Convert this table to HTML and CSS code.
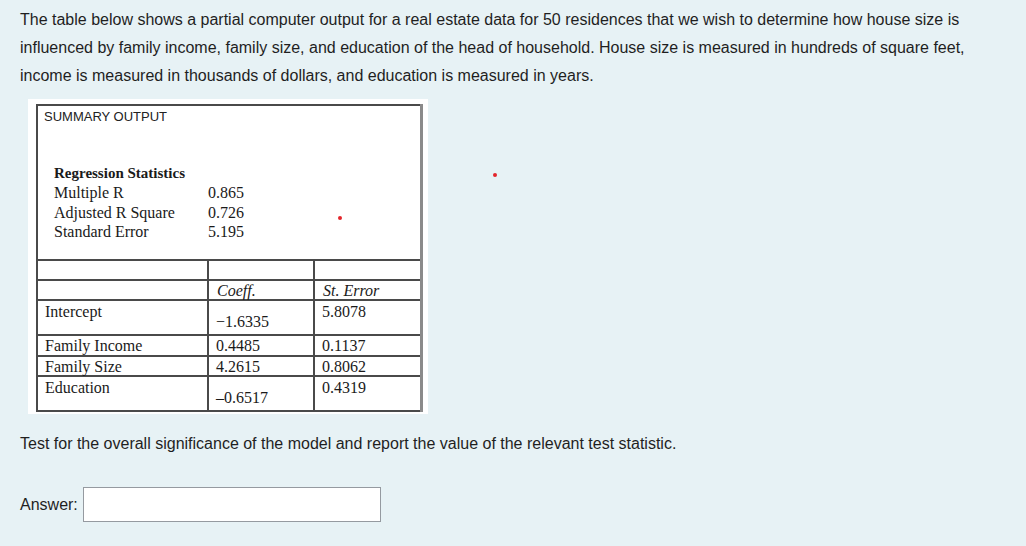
FILE: index.html
```html
<!DOCTYPE html>
<html>
<head>
<meta charset="utf-8">
<link rel="stylesheet" href="styles.css">
</head>
<body>
<div class="page">
  <p class="intro">The table below shows a partial computer output for a real estate data for 50 residences that we wish to determine how house size is influenced by family income, family size, and education of the head of household. House size is measured in hundreds of square feet, income is measured in thousands of dollars, and education is measured in years.</p>
  <div class="figure">
    <table class="reg">
      <colgroup><col class="c1"><col class="c2"><col class="c3"></colgroup>
      <tr class="r-summary">
        <td colspan="3" class="summary">
          <div class="sum-title">SUMMARY OUTPUT</div>
          <div class="stats">
            <div class="stats-head">Regression Statistics</div>
            <div class="stats-row"><span class="lbl">Multiple R</span><span>0.865</span></div>
            <div class="stats-row"><span class="lbl">Adjusted R Square</span><span>0.726</span></div>
            <div class="stats-row"><span class="lbl">Standard Error</span><span>5.195</span></div>
          </div>
          <span class="dot dot-in"></span>
        </td>
      </tr>
      <tr class="r-empty"><td></td><td></td><td></td></tr>
      <tr class="r-head"><td></td><td class="it">Coeff.</td><td class="it">St. Error</td></tr>
      <tr class="r-tall"><td class="top">Intercept</td><td class="bot">&minus;1.6335</td><td class="top">5.8078</td></tr>
      <tr class="r-a"><td>Family Income</td><td>0.4485</td><td>0.1137</td></tr>
      <tr class="r-b"><td>Family Size</td><td>4.2615</td><td>0.8062</td></tr>
      <tr class="r-tall2"><td class="top">Education</td><td class="bot">&ndash;0.6517</td><td class="top">0.4319</td></tr>
    </table>
  </div>
  <span class="dot dot-out"></span>
  <p class="question">Test for the overall significance of the model and report the value of the relevant test statistic.</p>
  <div class="answer">
    <label class="answer-label" for="ans">Answer:</label>
    <input class="answer-input" id="ans" type="text">
  </div>
</div>
</body>
</html>
```

FILE: styles.css
```css
html, body {
  margin: 0;
  padding: 0;
  background: #e7f2f5;
}
body {
  font-family: "Liberation Sans", Arial, sans-serif;
  color: #1f1f1f;
}
.page {
  position: relative;
  padding: 6px 20px 0 20px;
}
.intro {
  margin: 0;
  font-size: 16px;
  line-height: 28px;
  width: 955px;
}
.figure {
  margin: 9px 0 0 8px;
  width: 385px;
  height: 305px;
  padding: 5px 7px 5px 8px;
  background: #ffffff;
  position: relative;
}
.reg {
  border-collapse: collapse;
  table-layout: fixed;
  width: 384px;
  font-family: "Liberation Serif", "Times New Roman", serif;
  font-size: 16px;
  color: #1a1a1a;
}
.c1 { width: 171px; }
.c2 { width: 106px; }
.c3 { width: 107px; }
.reg td {
  border: 2px solid #4a4a4a;
  padding: 0 0 0 7px;
  line-height: 17px;
  vertical-align: middle;
}
.reg tr td:last-child {
  border-right: 3px solid #8a8a8a;
}
.reg td.summary {
  height: 147px;
  vertical-align: top;
  padding: 3px 6px;
  position: relative;
}
.sum-title {
  font-family: "Liberation Sans", Arial, sans-serif;
  font-size: 13px;
  line-height: 16px;
  color: #222;
}
.stats {
  margin: 39px 0 0 10px;
}
.stats-head {
  font-weight: bold;
  font-size: 15px;
  line-height: 19px;
}
.stats-row {
  display: flex;
  font-size: 16px;
  line-height: 19.5px;
}
.stats-row .lbl {
  width: 154px;
}
.r-empty td { height: 18px; }
.r-head td { height: 18px; }
.r-tall td { height: 29px; }
.r-a td { height: 19px; }
.r-b td { height: 18px; }
.r-tall2 td { height: 29px; }
.reg td.it { font-style: italic; padding-left: 8px; }
.reg td.top { vertical-align: top; padding-top: 2px; }
.reg td.bot { vertical-align: bottom; padding-bottom: 4px; }
.dot {
  position: absolute;
  width: 4px;
  height: 4px;
  border-radius: 50%;
  background: #e3252b;
}
.dot-in {
  left: 300px;
  top: 110px;
}
.dot-out {
  left: 493px;
  top: 173px;
}
.question {
  margin: 21px 0 0 0;
  font-size: 16px;
  line-height: 18px;
}
.answer {
  display: flex;
  align-items: center;
  margin-top: 34px;
}
.answer-label {
  font-size: 16px;
  margin-right: 5px;
}
.answer-input {
  width: 298px;
  box-sizing: border-box;
  height: 35px;
  border: 1px solid #959aa0;
  background: #fff;
  padding: 0 6px;
  margin: 0;
}
```
